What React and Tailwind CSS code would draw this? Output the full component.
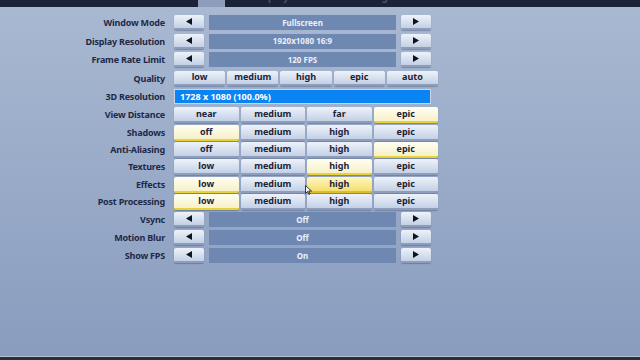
import React from 'react';

const font = { fontFamily: '"Noto Sans", "Open Sans", sans-serif' };

function Tri({ dir }) {
    return (
        <svg width="6" height="7" viewBox="0 0 6 7">
            {dir === 'left'
                ? <polygon points="6,0 6,7 0,3.5" fill="#10131c" />
                : <polygon points="0,0 0,7 6,3.5" fill="#10131c" />}
        </svg>
    );
}

function Btn({ children, sel, hot, className = '' }) {
    let bg = 'bg-gradient-to-b from-[#eef3fa] to-[#c3d0e5] border-b-[#8d9dbb]';
    if (sel) bg = 'bg-gradient-to-b from-[#fffef2] to-[#f6f1c8] border-b-[#e8d23a]';
    if (hot) bg = 'bg-gradient-to-b from-[#fff7c0] to-[#f5de6a] border-b-[#d9bf2c]';
    return (
        <div className={`flex items-center justify-center rounded-[2px] border-b-2 text-[9px] font-bold text-[#1b2238] shadow-[0_1px_1px_rgba(40,55,90,0.35)] ${bg} ${className}`}>
            {children}
        </div>
    );
}

function Row({ label, h, children }) {
    return (
        <div className={`flex items-start ${h}`}>
            <div className="w-[166px] shrink-0 pr-[1px] text-right text-[9px] font-bold leading-[15px] tracking-[-0.2px] text-[#1e2947]">{label}</div>
            <div className="ml-[8px]">{children}</div>
        </div>
    );
}

function Arrows({ value }) {
    return (
        <div className="flex h-[15px] w-[257px] gap-[5px]">
            <Btn className="w-[30px] h-[15px]"><Tri dir="left" /></Btn>
            <div className="flex w-[187px] items-center justify-center bg-[#6f88b2] text-[8px] font-bold text-[#eaf0fa]">{value}</div>
            <Btn className="w-[30px] h-[15px]"><Tri dir="right" /></Btn>
        </div>
    );
}

function Choice({ options, sel, hot, h = 'h-[16px]' }) {
    const cols = options.length === 5 ? 'grid-cols-5' : 'grid-cols-4';
    return (
        <div className={`grid w-[264px] gap-[2px] ${cols}`}>
            {options.map((o, i) => (
                <Btn key={i} sel={i === sel} hot={i === hot} className={h}>{o}</Btn>
            ))}
        </div>
    );
}

export default function App() {
    const four = ['near', 'medium', 'far', 'epic'];
    const q = ['low', 'medium', 'high', 'epic'];
    const aa = ['off', 'medium', 'high', 'epic'];

    return (
        <div style={font} className="relative flex h-[360px] w-[640px] flex-col overflow-hidden bg-gradient-to-b from-[#a9b9d2] to-[#899cbe]">
            {/* top bar */}
            <div className="flex h-[7px] shrink-0 overflow-hidden bg-[#1b2339]">
                <div className="ml-[198px] w-[27px] bg-[#8e9dbb]" />
                <div className="ml-[14px] -mt-[11px] text-[10px] font-bold leading-[14px] text-[#4a5370]">Gameplay&nbsp;&nbsp;&nbsp;&nbsp;Controls&nbsp;&nbsp;&nbsp;&nbsp;Settings</div>
            </div>

            <div className="flex flex-1 flex-col pt-[8px]">
                <Row label="Window Mode" h="h-[18.5px]"><Arrows value="Fullscreen" /></Row>
                <Row label="Display Resolution" h="h-[18.5px]"><Arrows value="1920x1080 16:9" /></Row>
                <Row label="Frame Rate Limit" h="h-[18.5px]"><Arrows value="120 FPS" /></Row>
                <Row label="Quality" h="h-[18.5px]">
                    <Choice options={['low', 'medium', 'high', 'epic', 'auto']} h="h-[15px]" />
                </Row>
                <Row label="3D Resolution" h="h-[18px]">
                    <div className="flex h-[15px] w-[257px] items-center border border-[#c9d6ea] bg-[#0b84f3] pl-[5px] text-[9px] font-bold text-white">
                        1728 x 1080 (100.0%)
                    </div>
                </Row>
                <Row label="View Distance" h="h-[17.5px]"><Choice options={four} sel={3} /></Row>
                <Row label="Shadows" h="h-[17.5px]"><Choice options={aa} sel={0} /></Row>
                <Row label="Anti-Aliasing" h="h-[17px]"><Choice options={aa} sel={3} /></Row>
                <Row label="Textures" h="h-[17.5px]"><Choice options={q} sel={2} /></Row>
                <Row label="Effects" h="h-[17.5px]"><Choice options={q} sel={0} hot={2} /></Row>
                <Row label="Post Processing" h="h-[18px]"><Choice options={q} sel={0} /></Row>
                <Row label="Vsync" h="h-[18px]"><Arrows value="Off" /></Row>
                <Row label="Motion Blur" h="h-[18px]"><Arrows value="Off" /></Row>
                <Row label="Show FPS" h="h-[18px]"><Arrows value="On" /></Row>
            </div>

            {/* bottom strip */}
            <div className="h-[1px] shrink-0 bg-[#b6c2d6]" />
            <div className="h-[3px] shrink-0 bg-[#2b303b]" />

            {/* mouse cursor */}
            <svg className="absolute left-[305px] top-[185px]" width="7" height="10" viewBox="0 0 7 10">
                <polygon points="0.5,0.5 0.5,8.5 2.5,6.5 4,9.5 5,9 3.7,6 6.5,6" fill="#f4f4f4" stroke="#111" strokeWidth="0.8" />
            </svg>
        </div>
    );
}
